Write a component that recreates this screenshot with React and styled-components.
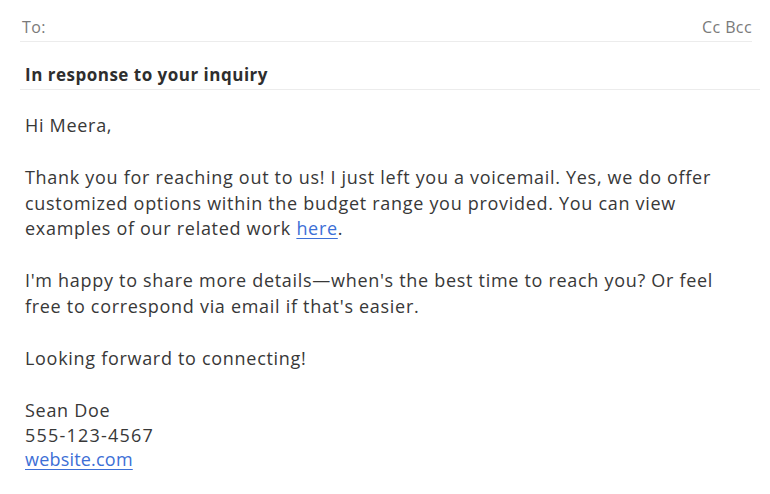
import styled, { createGlobalStyle } from "styled-components";

const Global = createGlobalStyle`
  body {
    margin: 0;
    background: #ffffff;
    font-family: "Open Sans", "Liberation Sans", sans-serif;
    color: #333333;
  }
`;

const Wrapper = styled.div`
  width: 770px;
  height: 494px;
  padding: 0 10px 0 20px;
  box-sizing: border-box;
  overflow: hidden;
`;

const HeaderRow = styled.div`
  display: flex;
  align-items: center;
  justify-content: space-between;
  height: ${(p) => p.$height}px;
  margin-right: ${(p) => p.$inset || 0}px;
  border-bottom: 1px solid #ececec;
  padding-left: ${(p) => p.$pad}px;
`;

const Label = styled.span`
  font-size: 16px;
  letter-spacing: 0.4px;
  color: #7a7a7a;
  padding-top: 12px;
`;

const Subject = styled.span`
  font-size: 17px;
  letter-spacing: 0.5px;
  font-weight: 700;
  color: #2e2e2e;
  padding-top: 17px;
`;

const Body = styled.div`
  padding: 23px 0 0 5px;
  font-size: 18px;
  letter-spacing: 0.7px;
  line-height: 25.5px;
  color: #383838;
`;

const Para = styled.p`
  margin: 0 0 26.5px;
  white-space: nowrap;
`;

const Signature = styled.div`
  display: flex;
  flex-direction: column;
`;

const Phone = styled.span`
  letter-spacing: 1.2px;
`;

const Link = styled.a`
  color: #3d6fd6;
  text-decoration: underline;
  text-underline-offset: 3px;
  letter-spacing: ${(p) => p.$ls || "inherit"};
  line-height: ${(p) => p.$lh || "inherit"};
`;

export default function App() {
  return (
    <Wrapper>
      <Global />
      <HeaderRow $height={41} $inset={8} $pad={2}>
        <Label>To:</Label>
        <Label>Cc Bcc</Label>
      </HeaderRow>
      <HeaderRow $height={47} $pad={5}>
        <Subject>In response to your inquiry</Subject>
      </HeaderRow>
      <Body>
        <Para>Hi Meera,</Para>
        <Para>
          Thank you for reaching out to us! I just left you a voicemail. Yes, we do offer
          <br />
          customized options within the budget range you provided. You can view
          <br />
          examples of our related work <Link href="#">here</Link>.
        </Para>
        <Para>
          I'm happy to share more details—when's the best time to reach you? Or feel
          <br />
          free to correspond via email if that's easier.
        </Para>
        <Para>Looking forward to connecting!</Para>
        <Signature>
          <span>Sean Doe</span>
          <Phone>555-123-4567</Phone>
          <Link href="#" $lh="21px" $ls="0.2px">website.com</Link>
        </Signature>
      </Body>
    </Wrapper>
  );
}
